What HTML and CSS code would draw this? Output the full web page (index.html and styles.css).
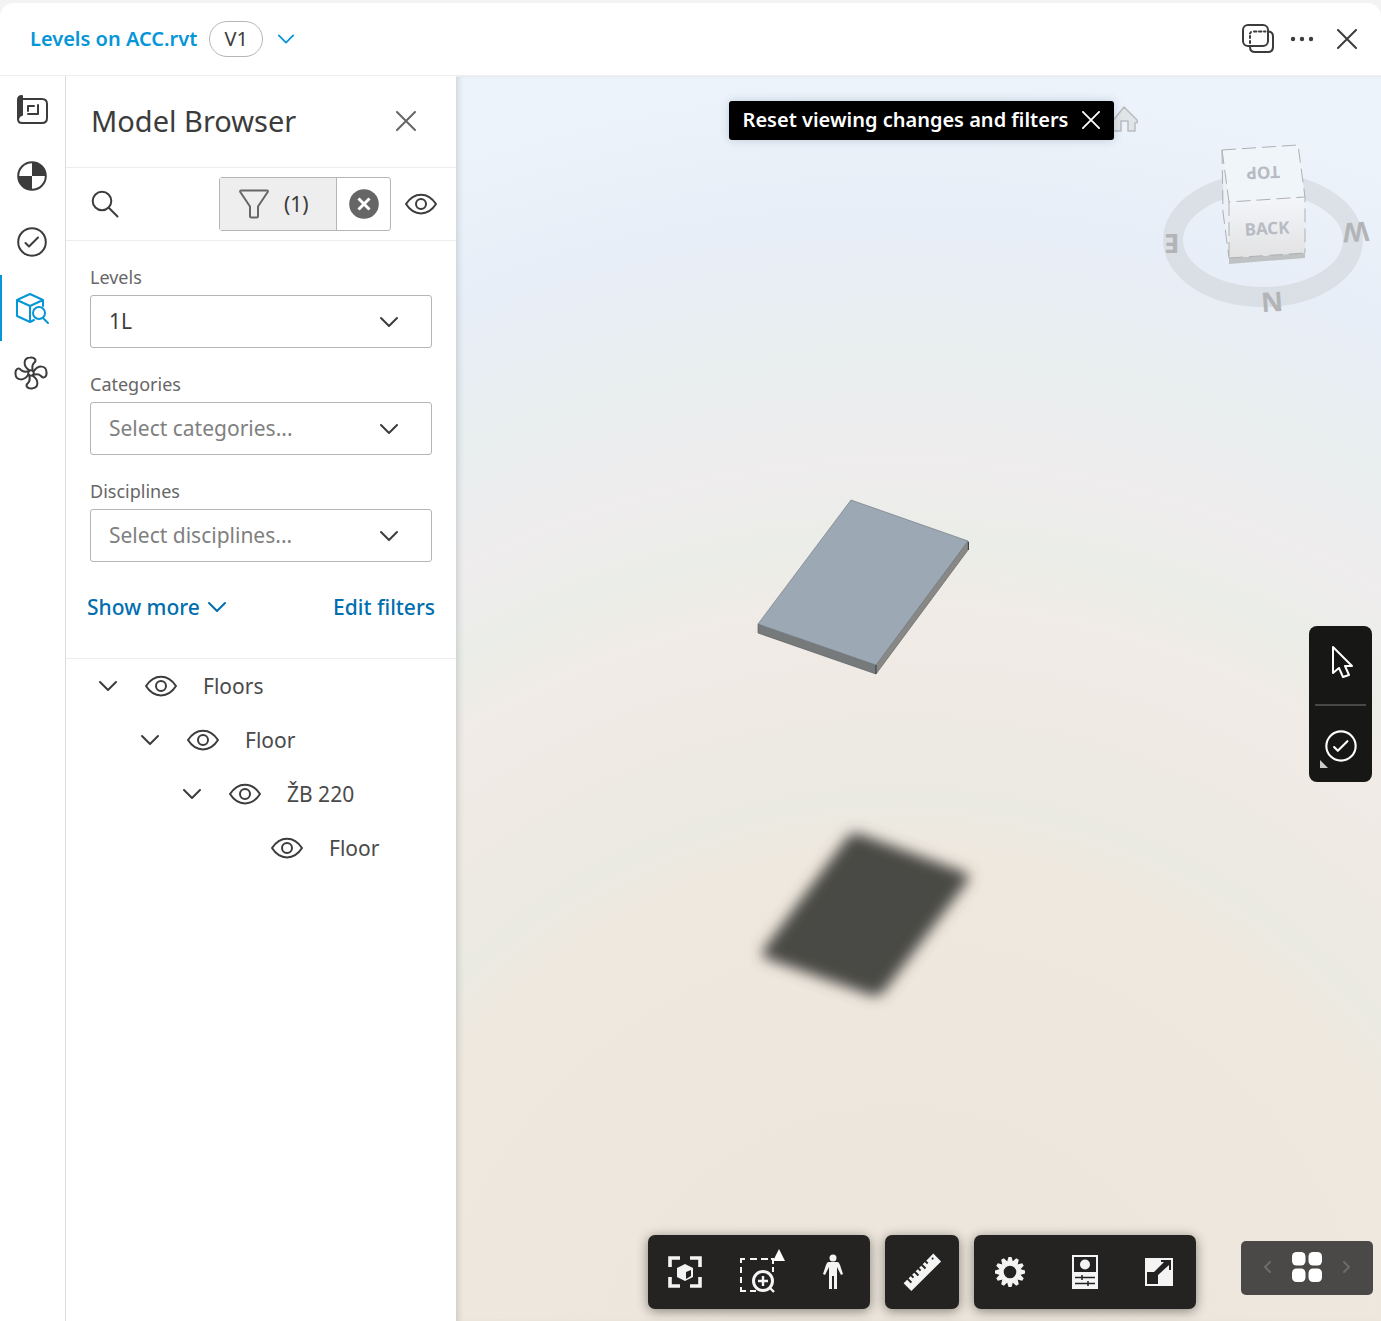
FILE: index.html
```html
<!DOCTYPE html>
<html lang="en">
<head>
  <meta charset="utf-8">
  <title>Levels on ACC.rvt</title>
  <meta name="viewport" content="width=device-width, initial-scale=1">
  <link rel="stylesheet" href="styles.css">
</head>
<body>
  <!-- Shared icons -->
  <svg class="sprite" aria-hidden="true">
    <symbol id="chevron" viewBox="0 0 20 20"><path d="M2 6l8 8 8-8"/></symbol>
    <symbol id="close" viewBox="0 0 20 20"><path d="M1 1l18 18M19 1L1 19"/></symbol>
    <symbol id="eye" viewBox="0 0 34 24"><path d="M2 12C10-.5 24-.5 32 12 24 24.500 10 24.500 2 12z"/><circle cx="17" cy="12" r="5"/></symbol>
    <symbol id="check" viewBox="0 0 32 32"><circle cx="16" cy="16" r="13.800"/><path d="M9.500 17l3.500 3.500 9-9"/></symbol>
  </svg>

  <div class="app">
    <header class="topbar">
      <a class="file-name" href="#">Levels on ACC.rvt</a>
      <button class="version">V1</button>
      <button class="icon-btn version-menu" aria-label="Versions"><svg class="icon" width="20" height="20"><use href="#chevron"/></svg></button>
      <div class="topbar-actions">
        <button class="icon-btn" aria-label="Compare">
          <svg class="icon" width="34" height="32" viewBox="0 0 34 32"><rect x="2" y="2" width="25" height="21" rx="5"/><path d="M27 8.500c3.500 0 5 2 5 5V24c0 3-2 5-5 5H14c-3 0-5-2-5-5"/><path d="M9 20v-2M9 15v-2M9 10.500l1-1.500M13 8.500h2.500M18 8.500h2.500M23 8.500h1.500"/></svg>
        </button>
        <button class="icon-btn" aria-label="More">
          <svg width="24" height="8" viewBox="0 0 24 8" fill="currentColor"><circle cx="3" cy="4" r="2.200"/><circle cx="12" cy="4" r="2.200"/><circle cx="21" cy="4" r="2.200"/></svg>
        </button>
        <button class="icon-btn close-file" aria-label="Close"><svg class="icon" width="20" height="20"><use href="#close"/></svg></button>
      </div>
    </header>

    <main class="workspace">
      <nav class="rail">
        <button class="rail-btn" aria-label="Sheets">
          <svg class="icon" width="34" height="34" viewBox="0 0 34 34"><path d="M7 6h20c3 0 5 2 5 5v14c0 3-2 5-5 5H7c-3 0-4-2-4-4"/><path fill="currentColor" d="M3 26V7c0-3 1-4 4-4v19c-2 0-3 1-4 4z"/><path d="M13 18v-5h6M13 21h10v-9"/></svg>
        </button>
        <button class="rail-btn" aria-label="Views">
          <svg class="icon" width="32" height="32" viewBox="0 0 32 32"><circle cx="16" cy="16" r="13.800"/><path fill="currentColor" stroke="none" d="M16 2a14 14 0 0 1 14 14H2a14 14 0 0 0 14 14z"/></svg>
        </button>
        <button class="rail-btn" aria-label="Issues"><svg class="icon" width="32" height="32"><use href="#check"/></svg></button>
        <button class="rail-btn active" aria-label="Model browser">
          <svg class="icon" width="34" height="34" viewBox="0 0 34 34"><path d="M28 15V9L15 3 2 9v16l13 6 4-2M2 9l13 6 13-6M15 15v16"/><circle cx="24" cy="22" r="6"/><path d="M28 27l5 5"/></svg>
        </button>
        <button class="rail-btn" aria-label="Systems">
          <svg class="icon" width="36" height="36" viewBox="0 0 36 36"><g transform="translate(17 17)"><circle r="2.800"/><path id="blade" d="M-2-3C-8-7-8-15-1-15.500c5-.5 7 3 4 5.500C1-8 1-5 2-2"/><use href="#blade" transform="rotate(90)"/><use href="#blade" transform="rotate(180)"/><use href="#blade" transform="rotate(270)"/></g></svg>
        </button>
      </nav>

      <aside class="panel">
        <div class="panel-header">
          <h1>Model Browser</h1>
          <button class="icon-btn muted" aria-label="Close panel"><svg class="icon" width="20" height="20"><use href="#close"/></svg></button>
        </div>

        <div class="panel-tools">
          <button class="icon-btn search" aria-label="Search">
            <svg class="icon" width="28" height="28" viewBox="0 0 28 28"><circle cx="11" cy="11" r="9.300"/><path d="M17.500 17.500l9 9"/></svg>
          </button>
          <div class="filter-group">
            <button class="filter-btn">
              <svg class="icon" width="32" height="32" viewBox="0 0 32 32"><path d="M3 2.500h26c.8 0 1 .8.700 1.500L20 18.500V28c0 1-.5 1.500-1.500 1.500h-5c-1 0-1.500-.5-1.500-1.500v-9.500L2.300 4c-.3-.7-.1-1.500.7-1.500z"/></svg>
              <span>(1)</span>
            </button>
            <button class="clear-btn" aria-label="Clear filters">
              <svg width="30" height="30" viewBox="0 0 30 30"><circle cx="15" cy="15" r="14.800" fill="#666"/><path d="M9.500 9.500l11 11M20.500 9.500l-11 11" stroke="#fff" stroke-width="3"/></svg>
            </button>
          </div>
          <button class="icon-btn" aria-label="Visibility"><svg class="icon" width="34" height="24"><use href="#eye"/></svg></button>
        </div>

        <form class="filters">
          <div class="field">
            <label for="levels">Levels</label>
            <div class="select-box">
              <select id="levels"><option>1L</option></select>
              <svg class="icon" width="20" height="20"><use href="#chevron"/></svg>
            </div>
          </div>
          <div class="field">
            <label for="categories">Categories</label>
            <div class="select-box">
              <select id="categories" class="empty"><option>Select categories...</option></select>
              <svg class="icon" width="20" height="20"><use href="#chevron"/></svg>
            </div>
          </div>
          <div class="field">
            <label for="disciplines">Disciplines</label>
            <div class="select-box">
              <select id="disciplines" class="empty"><option>Select disciplines...</option></select>
              <svg class="icon" width="20" height="20"><use href="#chevron"/></svg>
            </div>
          </div>
          <div class="filter-links">
            <button type="button" class="link-btn">Show more <svg class="icon" width="20" height="20"><use href="#chevron"/></svg></button>
            <button type="button" class="link-btn">Edit filters</button>
          </div>
        </form>

        <ul class="tree">
          <li class="node level-1">
            <button class="icon-btn" aria-label="Collapse"><svg class="icon" width="20" height="20"><use href="#chevron"/></svg></button>
            <button class="icon-btn" aria-label="Toggle visibility"><svg class="icon" width="34" height="24"><use href="#eye"/></svg></button>
            <span>Floors</span>
          </li>
          <li class="node level-2">
            <button class="icon-btn" aria-label="Collapse"><svg class="icon" width="20" height="20"><use href="#chevron"/></svg></button>
            <button class="icon-btn" aria-label="Toggle visibility"><svg class="icon" width="34" height="24"><use href="#eye"/></svg></button>
            <span>Floor</span>
          </li>
          <li class="node level-3">
            <button class="icon-btn" aria-label="Collapse"><svg class="icon" width="20" height="20"><use href="#chevron"/></svg></button>
            <button class="icon-btn" aria-label="Toggle visibility"><svg class="icon" width="34" height="24"><use href="#eye"/></svg></button>
            <span>ŽB 220</span>
          </li>
          <li class="node level-4">
            <button class="icon-btn" aria-label="Toggle visibility"><svg class="icon" width="34" height="24"><use href="#eye"/></svg></button>
            <span>Floor</span>
          </li>
        </ul>
      </aside>

      <section class="viewer">
        <!-- Floor slab and its shadow on the ground -->
        <svg class="model" width="260" height="540" viewBox="740 480 260 540">
          <defs><filter id="soft" x="-20%" y="-20%" width="140%" height="140%"><feGaussianBlur stdDeviation="7"/></filter></defs>
          <path d="M846 839q5-8 14-5l104 38q8 3 3 10l-82 108q-6 8-15 5l-102-36q-9-3-4-10z" fill="#4a4844" filter="url(#soft)"/>
          <path d="M758 624l118 41v9l-118-41z" fill="#777a7b" stroke="#5e6163" stroke-width=".7"/>
          <path d="M876 665l92-124v9l-92 124z" fill="#888886" stroke="#666" stroke-width=".7"/>
          <path d="M851 500l117 41-92 124-118-41z" fill="#9ca8b4" stroke="#767d84" stroke-width=".7"/>
          <path d="M876 665v9M968.500 542v8" stroke="#414446"/>
        </svg>

        <button class="home" aria-label="Home view">
          <svg width="30" height="30" viewBox="0 0 30 30"><path d="M15 3l13 13c1 2 0 3-2 3v8h-7V17h-7v10H4V19H2z" fill="#e2e5e8" stroke="#b9bcc0" stroke-width="1.500" stroke-linejoin="round"/></svg>
        </button>

        <svg class="view-cube" width="231" height="190" viewBox="0 0 231 190">
          <defs><linearGradient id="face" x1="0" y1="0" x2="0" y2="1"><stop offset="0" stop-color="#f4f6fa"/><stop offset="1" stop-color="#e2e2e3"/></linearGradient></defs>
          <ellipse cx="113" cy="110" rx="90" ry="57" fill="none" stroke="#b8bcc0" stroke-opacity=".3" stroke-width="20"/>
          <g class="compass">
            <text x="22" y="114" text-anchor="middle" dominant-baseline="central" transform="rotate(180 22 114)">E</text>
            <text x="206" y="103" text-anchor="middle" dominant-baseline="central" transform="rotate(176 206 103)">W</text>
            <text x="122" y="171" text-anchor="middle" dominant-baseline="central" transform="rotate(-4 122 171)">N</text>
          </g>
          <path d="M79 128l76-5v5l-76 6z" fill="#bfc2c3"/>
          <path d="M72 20l7 52v56l-5-44z" fill="#edf1f5"/>
          <path d="M72 20l76-5 7 52-76 5z" fill="#f0f5f9"/>
          <path d="M79 72l76-5v56l-76 5z" fill="url(#face)"/>
          <g fill="none" stroke="#adb0b5" stroke-dasharray="14 6"><path d="M72 20l76-5 7 52M72 20l7 52 76-5v56M79 72v56M72 20l1 62 6 46"/><path d="M79 128l76-5"/></g>
          <g class="cube-text">
            <text x="113" y="43" text-anchor="middle" dominant-baseline="central" transform="rotate(177 113 43)">TOP</text>
            <text x="117" y="98" text-anchor="middle" dominant-baseline="central" transform="rotate(-3 117 98)">BACK</text>
          </g>
        </svg>

        <div class="overlay-top">
          <button class="toast">Reset viewing changes and filters <svg class="icon" width="18" height="18"><use href="#close"/></svg></button>
        </div>

        <div class="side-tools">
          <button class="side-btn" aria-label="Select">
            <svg class="icon" width="34" height="38" viewBox="0 0 34 38"><path d="M9 4v26l6-5 4 9 6-2-4-9h7z"/></svg>
          </button>
          <button class="side-btn flyout" aria-label="Create issue"><svg class="icon" width="34" height="34"><use href="#check"/></svg></button>
        </div>

        <div class="bottom-tools">
          <div class="tool-group">
            <button class="tool" aria-label="Fit to view">
              <svg width="36" height="36" viewBox="0 0 36 36"><path d="M3 13V4h10M23 4h10v9M33 23v9H23M13 32H3v-9" fill="none" stroke="#f4f4f4" stroke-width="3.600"/><path fill="#f4f4f4" d="M18 10l8 4v9l-8 4-8-4v-9z"/><path fill="#222" d="M19 18l5-2v6l-5 3z"/></svg>
            </button>
            <button class="tool zoom-tool" aria-label="Zoom window">
              <svg width="48" height="48" viewBox="0 0 48 48"><path d="M6 15v-4h4M15 11h7M26 11h7M36 11h2v5M6 19v6M6 29v6M6 39v4h5M15 43h6M38 19v5" fill="none" stroke="#f4f4f4" stroke-width="2"/><circle cx="28" cy="33" r="9.500" fill="#222" stroke="#f4f4f4" stroke-width="3"/><path d="M28 28v10M23 33h10M34 39l5 5" stroke="#f4f4f4" stroke-width="2.400"/><path fill="#fff" d="M44 1l6 12H38z"/></svg>
            </button>
            <button class="tool" aria-label="First person">
              <svg width="24" height="38" viewBox="0 0 24 38" fill="#f4f4f4"><circle cx="12" cy="5" r="3.500"/><path d="M8 9h8c2 0 2 1 3 3l3 9-2 1-4-8v22h-3V23h-2v13H8V14l-4 8-2-1 3-9c1-2 1-3 3-3z"/></svg>
            </button>
          </div>
          <div class="tool-group">
            <button class="tool" aria-label="Measure">
              <svg width="40" height="40" viewBox="0 0 40 40"><g transform="rotate(-45 20 20)"><path fill="#f4f4f4" d="M-1 15h5v5h2v-5h3v3h2v-3h3v5h2v-5h3v3h2v-3h3v5h2v-5h3v3h2v-3h10v11H-1z"/><circle cx="37" cy="18" r="1" fill="#222"/></g></svg>
            </button>
          </div>
          <div class="tool-group">
            <button class="tool" aria-label="Settings">
              <svg width="32" height="32" viewBox="-15 -16 32 32"><g fill="#f4f4f4"><g id="teeth"><path d="M-3-10l1.500-5h3L3-10zM-3 10l1.500 5h3L3 10z"/><path d="M-3-10l1.500-5h3L3-10zM-3 10l1.500 5h3L3 10z" transform="rotate(90)"/></g><use href="#teeth" transform="rotate(30)"/><use href="#teeth" transform="rotate(60)"/></g><circle r="8.500" fill="none" stroke="#f4f4f4" stroke-width="4.400"/></svg>
            </button>
            <button class="tool" aria-label="Properties">
              <svg width="26" height="34" viewBox="0 0 26 34"><path fill="#f4f4f4" d="M0 0h26v34H0z"/><path fill="#222" d="M2 2h22v15H2z"/><circle cx="13" cy="9.500" r="5" fill="#f4f4f4"/><path d="M3 22.500h20M3 28.500h20M10 20v5M16 26v5" stroke="#222" stroke-width="1.500"/></svg>
            </button>
            <button class="tool" aria-label="Full screen">
              <svg width="28" height="28" viewBox="0 0 28 28"><path fill="#f4f4f4" d="M0 0h28v28H0z"/><path fill="#222" d="M2 14h11v12H2zM16 2h10v10h-2V7L12 18l-3-4 10-10h-3z"/></svg>
            </button>
          </div>
        </div>

        <div class="pager">
          <button class="pager-btn dim" aria-label="Previous"><svg class="icon" width="8" height="12" viewBox="0 0 8 12"><path d="M7 1L2 6l5 5"/></svg></button>
          <button class="pager-btn" aria-label="All views"><svg width="30" height="30" viewBox="0 0 30 30" fill="#fff"><rect width="13.500" height="13.500" rx="4.500"/><rect x="16.500" width="13.500" height="13.500" rx="4.500"/><rect y="16.500" width="13.500" height="13.500" rx="4.500"/><rect x="16.500" y="16.500" width="13.500" height="13.500" rx="4.500"/></svg></button>
          <button class="pager-btn dim" aria-label="Next"><svg class="icon" width="8" height="12" viewBox="0 0 8 12"><path d="M1 1l5 5-5 5"/></svg></button>
        </div>
      </section>
    </main>
  </div>
</body>
</html>
```
FILE: styles.css
```css
* { box-sizing: border-box; }
body { margin: 0; background: #f3f3f3; color: #3c3c3c; font: 20px/28px "Noto Sans", sans-serif; }
button { border: 0; padding: 0; background: none; color: inherit; font: inherit; cursor: pointer; }
svg { display: block; flex: none; }
.sprite { position: absolute; width: 0; height: 0; }
.icon { fill: none; stroke: currentColor; stroke-width: 2; stroke-linecap: round; stroke-linejoin: round; }
.icon-btn { display: flex; align-items: center; justify-content: center; }
.muted { color: #666; }

.app { display: flex; flex-direction: column; min-height: 100vh; padding-top: 3px; }

/* Top bar */
.topbar { display: flex; align-items: center; height: 73px; padding: 0 24px 0 30px;
          background: #fff; border-radius: 14px 14px 0 0; border-bottom: 1px solid #eee; }
.file-name { color: #0696d7; font-weight: 600; text-decoration: none; }
.version { width: 54px; height: 36px; margin-left: 12px; border: 1px solid #b5b5b5; border-radius: 18px; line-height: 32px; }
.version-menu { margin-left: 14px; color: #0696d7; }
.version-menu .icon { width: 18px; }
.topbar-actions { display: flex; align-items: center; gap: 15px; margin-left: auto; }
.close-file { margin-left: 8px; }

.workspace { display: flex; flex: 1; }

/* Left rail */
.rail { width: 66px; padding: 1px 0; background: #fff; border-right: 1px solid #dcdcdc; }
.rail-btn { display: flex; align-items: center; justify-content: center; width: 100%; height: 66px; padding-right: 4px; border-left: 2px solid transparent; }
.rail-btn.active { color: #0696d7; border-left-color: #0696d7; }

/* Model browser */
.panel { width: 390px; background: #fff; }
.panel-header { display: flex; align-items: center; justify-content: space-between; height: 92px; padding: 0 40px 2px 25px; border-bottom: 1px solid #eee; }
h1 { margin: 0; font-size: 29px; font-weight: 400; line-height: 40px; }
.panel-tools { display: flex; align-items: center; height: 73px; padding: 0 18px 0 25px; border-bottom: 1px solid #eee; }
.filter-group { display: flex; height: 54px; margin: 0 13px 0 auto; border: 1px solid #b5b5b5; border-radius: 3px; }
.filter-btn { display: flex; align-items: center; gap: 14px; width: 117px; padding-left: 18px; background: #eee; border-right: 1px solid #b5b5b5; font-size: 21px; }
.filter-btn .icon { color: #666; }
.clear-btn { display: flex; align-items: center; justify-content: center; width: 53px; }

.filters { padding: 24px 24px 36px; border-bottom: 1px solid #eee; font-size: 21px; }
.field { margin-bottom: 24px; }
.field label { display: block; margin-bottom: 6px; color: #666; font-size: 18px; line-height: 24px; }
.select-box { display: flex; align-items: center; height: 53px; border: 1px solid #b5b5b5; border-radius: 3px; }
.select-box select { flex: 1; height: 100%; margin-right: -52px; padding: 0 52px 2px 18px; border: 0; background: transparent;
                     color: #3c3c3c; font: inherit; appearance: none; }
.select-box select.empty { color: #808080; }
.select-box .icon { margin-right: 32px; pointer-events: none; }
.filter-links { display: flex; justify-content: space-between; margin: 30px -3px 0; color: #006eaf; font-weight: 500; }
.link-btn { display: flex; align-items: center; gap: 7px; height: 30px; }

.tree { margin: 0; padding: 0; list-style: none; font-size: 21px; }
.node { display: flex; align-items: center; height: 54px; }
.node span { margin-left: 25px; color: #4a4a4a; }
.node .icon-btn + .icon-btn { margin-left: 26px; }
.level-1 { padding-left: 32px; }
.level-2 { padding-left: 74px; }
.level-3 { padding-left: 116px; }
.level-4 { padding-left: 204px; }

/* 3D viewer */
.viewer { position: relative; flex: 1; overflow: hidden; border-top: 1px solid #e8edf2;
          box-shadow: inset 6px 0 6px -4px rgba(60, 80, 90, 0.2);
          background: radial-gradient(circle at 48% 108%, #ede5db 0, #efe8de 560px, #ebeae2 620px, #efeae4 750px, #f0ebe6 810px, #ebede8 880px, #efedee 960px, #e9eeef 1070px, #e8eef7 1190px, #edf3fb 1350px); }
.model { position: absolute; left: 284px; top: 403px; }
.view-cube { position: absolute; right: 0; top: 53px; }
.compass { fill: #b2b4b6; font-size: 27px; font-weight: 700; }
.cube-text { fill: #b8bbc3; font-size: 17px; font-weight: 700; }
.home { position: absolute; left: 653px; top: 27px; }

.overlay-top { position: absolute; top: 24px; left: 6px; right: 0; display: flex; justify-content: center; }
.toast { display: flex; align-items: center; gap: 14px; height: 39px; padding: 0 14px 2px;
         background: #000; border-radius: 3px; color: #fff; font-weight: 600; box-shadow: 0 0 10px rgba(0, 60, 90, 0.2); }

.side-tools { position: absolute; top: 549px; right: 9px; width: 63px; background: #171716; border-radius: 8px; color: #fff; }
.side-btn { position: relative; display: flex; align-items: center; justify-content: center; width: 100%; height: 78px; }
.side-btn:first-child { padding-bottom: 6px; }
.side-btn.flyout { padding-top: 6px; }
.side-btn.flyout::before { content: ""; position: absolute; top: 0; left: 6px; right: 6px; height: 2px; background: #484848; }
.side-btn.flyout::after { content: ""; position: absolute; left: 11px; bottom: 14px; border: 4px solid transparent; border-left-color: #ccc; border-bottom-color: #ccc; }

.bottom-tools { position: absolute; bottom: 12px; left: 6px; right: 0; display: flex; justify-content: center; gap: 15px; }
.tool-group { display: flex; background: #242321; border-radius: 7px; box-shadow: 0 2px 12px rgba(0, 0, 0, 0.45); }
.tool { display: flex; align-items: center; justify-content: center; width: 74px; height: 74px; }
.tool svg { overflow: visible; }

.pager { position: absolute; right: 8px; bottom: 26px; display: flex; align-items: center; justify-content: space-between;
         width: 132px; height: 54px; padding: 0 22px 2px; background: #4a4948; border-radius: 5px; }
.pager-btn { display: flex; }
.dim { color: #6c6c6c; }
```
